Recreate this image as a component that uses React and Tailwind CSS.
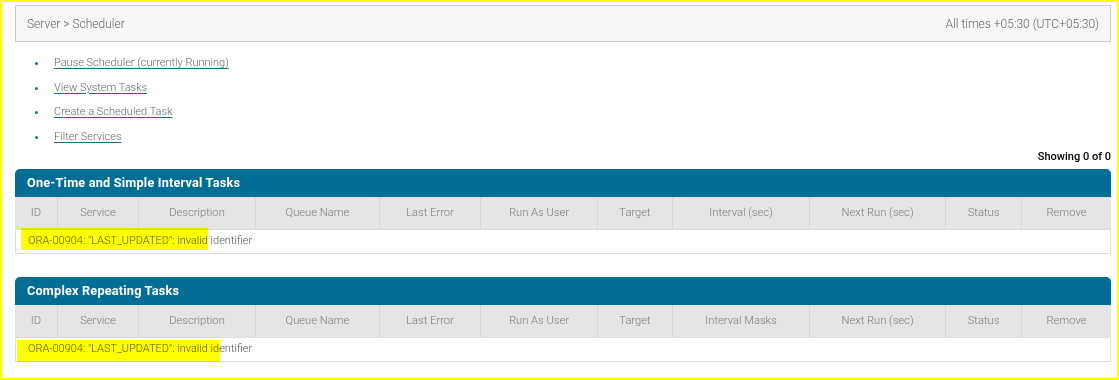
import React from "react";

const columnsA = ["ID", "Service", "Description", "Queue Name", "Last Error", "Run As User", "Target", "Interval (sec)", "Next Run (sec)", "Status", "Remove"];
const columnsB = ["ID", "Service", "Description", "Queue Name", "Last Error", "Run As User", "Target", "Interval Masks", "Next Run (sec)", "Status", "Remove"];

const links = [
  "Pause Scheduler (currently Running)",
  "View System Tasks",
  "Create a Scheduled Task",
  "Filter Services",
];

const TaskPanel = ({ title, columns, highlight }) => {
  return (
    <div className="w-full">
      {/* Panel heading */}
      <div className="h-[28px] bg-[#026e96] rounded-t-[5px] flex items-center px-[12px]">
        <span className="text-white text-[12.7px] font-bold tracking-[0.2px]">{title}</span>
      </div>

      {/* Column headers */}
      <div className="grid grid-cols-[43px_81px_117px_124px_101px_117px_75px_137px_136px_76px_89px] h-[33px] bg-[#e5e5e4] border-b border-[#dcdcdc]">
        {columns.map((col, i) => (
          <div
            key={col}
            className={`flex items-center justify-center pt-[2px] text-[11.2px] font-light text-[#7a7a7a] ${
              i < columns.length - 1 ? "border-r border-[#d6d6d6]" : ""
            }`}
          >
            {col}
          </div>
        ))}
      </div>

      {/* Error row */}
      <div className="relative h-[24px] border-x border-b border-[#dcdcdc] bg-white flex items-center px-[12px]">
        <span className="relative z-10 text-[11px] font-light text-[#555]">
          ORA-00904: "LAST_UPDATED": invalid identifier
        </span>
        <div className={`absolute bg-[#ffff00] mix-blend-multiply z-20 ${highlight}`}></div>
      </div>
    </div>
  );
};

export default function App() {
  return (
    <div
      className="w-[1119px] h-[380px] border-2 border-[#ffff00] bg-white pl-[13px] pr-[6px] pt-[3px] overflow-hidden"
      style={{ fontFamily: "Roboto, 'Liberation Sans', sans-serif" }}
    >
      {/* Breadcrumb bar */}
      <div className="h-[37px] bg-[#f7f7f7] border border-[#cccccc] flex items-center justify-between px-[11px]">
        <span className="text-[12px] font-light text-[#666]">Server &gt; Scheduler</span>
        <span className="text-[12px] font-light text-[#666]">All times +05:30 (UTC+05:30)</span>
      </div>

      {/* Action links */}
      <ul className="pt-[9px] pl-[20px]">
        {links.map((link) => (
          <li key={link} className="h-[24.7px] flex items-center">
            <span className="w-[3px] h-[3px] rounded-full bg-[#1c6b94] mr-[16px]"></span>
            <a
              href="#"
              className="text-[11px] font-light text-[#666] underline decoration-[#1c6b94] underline-offset-[2px]"
            >
              {link}
            </a>
          </li>
        ))}
      </ul>

      <div className="flex justify-end h-[20px] items-center -mt-[3px]">
        <span className="text-[11px] text-black font-medium">Showing 0 of 0</span>
      </div>

      <div className="mt-[2px]">
        <TaskPanel
          title="One-Time and Simple Interval Tasks"
          columns={columnsA}
          highlight="left-[5px] w-[187px] -top-[2px] h-[22px]"
        />
      </div>

      <div className="mt-[23px]">
        <TaskPanel
          title="Complex Repeating Tasks"
          columns={columnsB}
          highlight="left-[1px] w-[203px] top-[2px] h-[22px]"
        />
      </div>
    </div>
  );
}
